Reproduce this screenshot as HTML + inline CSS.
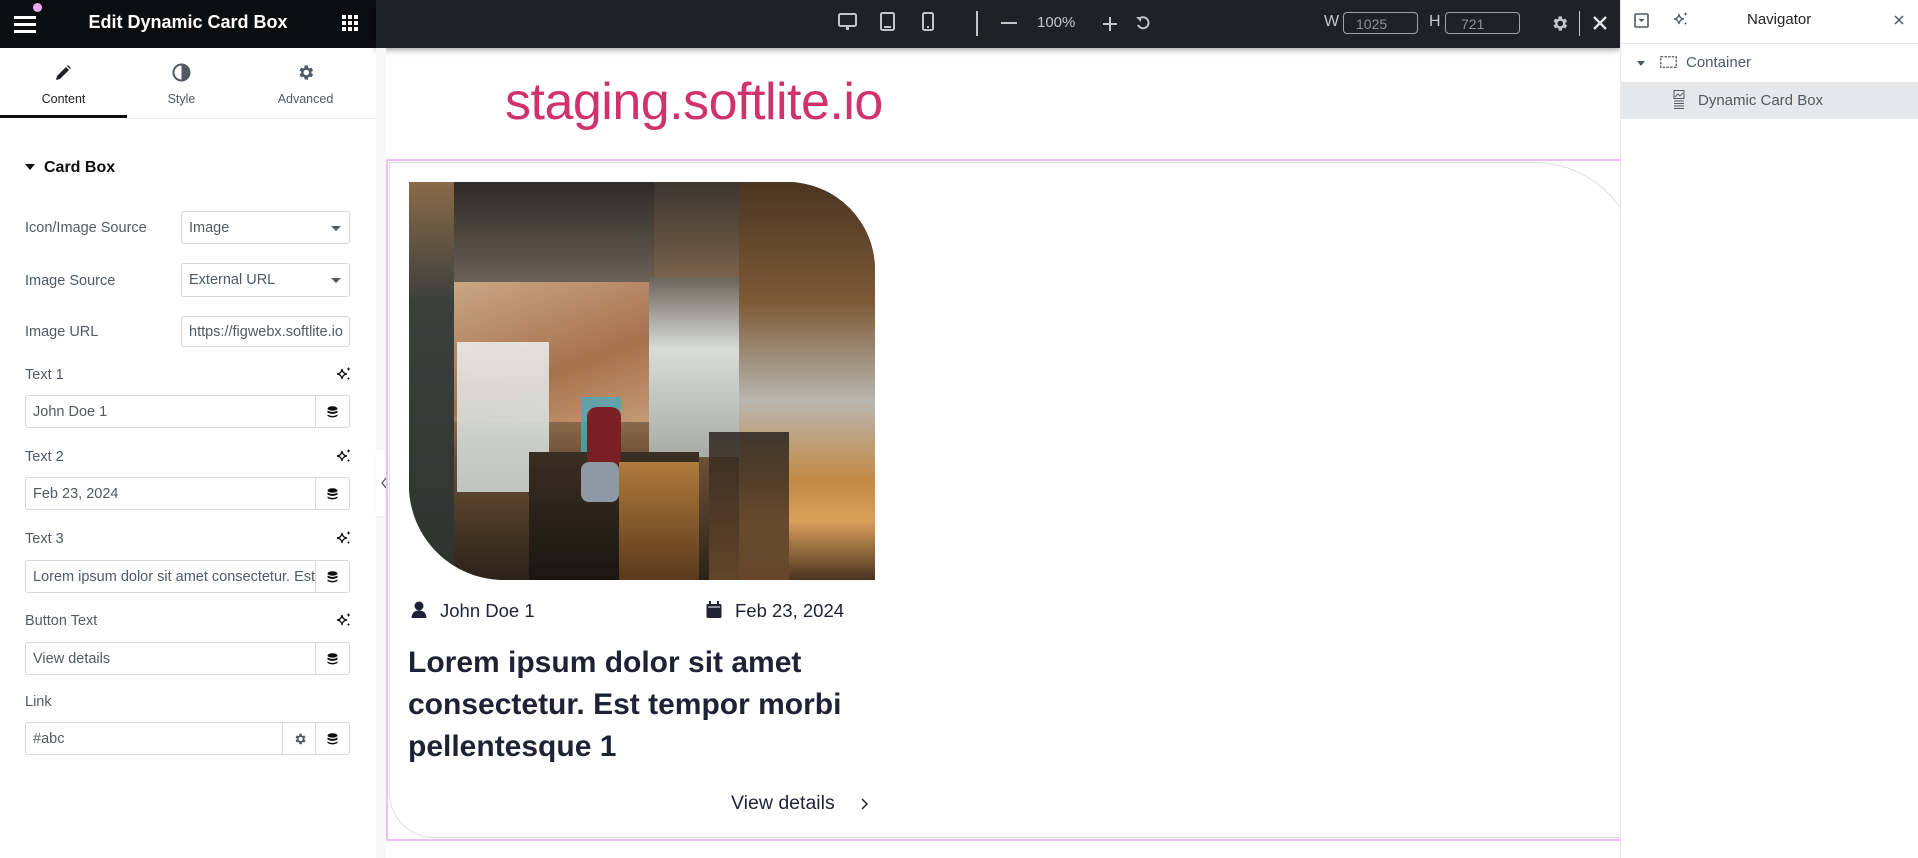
<!DOCTYPE html>
<html><head><meta charset="utf-8">
<style>
*{box-sizing:border-box;margin:0;padding:0}
body{width:1918px;height:858px;overflow:hidden;font-family:"Liberation Sans",Arial,sans-serif;background:#fff;position:relative}
.a{position:absolute}
.lbl{position:absolute;left:25px;font-size:14.5px;color:#515962}
.inp{position:absolute;border:1px solid #d5d8dc;border-radius:3px;background:#fff;font-size:14.5px;color:#515962;padding-left:7px;display:flex;align-items:center;overflow:hidden;white-space:nowrap}
.btn{position:absolute;top:0;bottom:0;width:34px;border-left:1px solid #d5d8dc;display:flex;align-items:center;justify-content:center;background:#fff}
.caret{position:absolute;right:8px;top:50%;margin-top:-2px;width:0;height:0;border-left:5px solid transparent;border-right:5px solid transparent;border-top:5px solid #515962}
.spark{position:absolute;left:336px}
</style></head><body>

<div class="a" style="left:0;top:0;width:376px;height:48px;background:#0c0d0e"></div>
<svg class="a" style="left:14px;top:14px" width="24" height="20"><rect x="0" y="2" width="22" height="3" fill="#fff"/><rect x="0" y="9" width="22" height="3" fill="#fff"/><rect x="0" y="16" width="22" height="3" fill="#fff"/></svg>
<div class="a" style="left:33px;top:3px;width:9px;height:9px;border-radius:50%;background:#f0a8f0"></div>
<div class="a" style="left:0;width:376px;top:12px;text-align:center;color:#fff;font-weight:bold;font-size:18px">Edit Dynamic Card Box</div>
<svg class="a" style="left:342px;top:15px" width="17" height="17" fill="#fff"><rect x="0" y="0" width="4" height="4"/><rect x="6" y="0" width="4" height="4"/><rect x="12" y="0" width="4" height="4"/><rect x="0" y="6" width="4" height="4"/><rect x="6" y="6" width="4" height="4"/><rect x="12" y="6" width="4" height="4"/><rect x="0" y="12" width="4" height="4"/><rect x="6" y="12" width="4" height="4"/><rect x="12" y="12" width="4" height="4"/></svg>

<svg class="a" style="left:54px;top:64px" width="18" height="18"><path d="M2 16 L3 12 L12 3 L15 6 L6 15 Z" fill="#1f2124"/><path d="M13 2 L14 1 L17 4 L16 5Z" fill="#1f2124"/></svg>
<div class="a" style="left:0;width:127px;top:92px;text-align:center;font-size:12.5px;color:#1f2124">Content</div>
<div class="a" style="left:0;top:115px;width:127px;height:3px;background:#0c0d0e"></div>
<svg class="a" style="left:172px;top:63px" width="19" height="19"><circle cx="9.5" cy="9.5" r="8" fill="none" stroke="#515962" stroke-width="2"/><path d="M9.5 1.5 A8 8 0 0 1 9.5 17.5Z" fill="#515962"/></svg>
<div class="a" style="left:118px;width:127px;top:92px;text-align:center;font-size:12.5px;color:#515962">Style</div>
<svg class="a" style="left:296px;top:63px" width="19" height="19" viewBox="0 0 24 24"><path fill="#515962" d="M19.4 13a7.5 7.5 0 0 0 0-2l2.1-1.6-2-3.5-2.5 1a7 7 0 0 0-1.7-1L15 3h-4l-.4 2.9a7 7 0 0 0-1.7 1l-2.5-1-2 3.5L6.6 11a7.5 7.5 0 0 0 0 2l-2.2 1.6 2 3.5 2.5-1a7 7 0 0 0 1.7 1L11 21h4l.4-2.9a7 7 0 0 0 1.7-1l2.5 1 2-3.5ZM13 15.5A3.5 3.5 0 1 1 13 8.5a3.5 3.5 0 0 1 0 7Z"/></svg>
<div class="a" style="left:242px;width:127px;top:92px;text-align:center;font-size:12.5px;color:#515962">Advanced</div>
<div class="a" style="left:127px;top:118px;width:249px;height:1px;background:#e6e8ea"></div>

<div class="a" style="left:25px;top:164px;width:0;height:0;border-left:5px solid transparent;border-right:5px solid transparent;border-top:6px solid #0c0d0e"></div>
<div class="a" style="left:44px;top:159px;font-size:16px;font-weight:bold;color:#0c0d0e">Card Box</div>

<div class="lbl" style="top:220px">Icon/Image Source</div>
<div class="inp" style="left:181px;top:211px;width:169px;height:33px">Image<span class="caret"></span></div>
<div class="lbl" style="top:273px">Image Source</div>
<div class="inp" style="left:181px;top:263px;width:169px;height:34px">External URL<span class="caret"></span></div>
<div class="lbl" style="top:324px">Image URL</div>
<div class="inp" style="left:181px;top:316px;width:169px;height:31px">https://figwebx.softlite.io</div>

<div class="lbl" style="top:367px">Text 1</div>
<div class="inp" style="left:25px;top:395px;width:325px;height:33px">John Doe 1<div class="btn" style="right:0"><svg width="11" height="12"><ellipse cx="5.5" cy="2.5" rx="5" ry="2.2" fill="#0c0d0e"/><path d="M0.5 4.5 q5 3 10 0 v2 q-5 3 -10 0z M0.5 8.5 q5 3 10 0 v1.5 q-5 3 -10 0z" fill="#0c0d0e"/></svg></div></div>
<div class="lbl" style="top:449px">Text 2</div>
<div class="inp" style="left:25px;top:477px;width:325px;height:33px">Feb 23, 2024<div class="btn" style="right:0"><svg width="11" height="12"><ellipse cx="5.5" cy="2.5" rx="5" ry="2.2" fill="#0c0d0e"/><path d="M0.5 4.5 q5 3 10 0 v2 q-5 3 -10 0z M0.5 8.5 q5 3 10 0 v1.5 q-5 3 -10 0z" fill="#0c0d0e"/></svg></div></div>
<div class="lbl" style="top:531px">Text 3</div>
<div class="inp" style="left:25px;top:560px;width:325px;height:33px">Lorem ipsum dolor sit amet consectetur. Est<div class="btn" style="right:0"><svg width="11" height="12"><ellipse cx="5.5" cy="2.5" rx="5" ry="2.2" fill="#0c0d0e"/><path d="M0.5 4.5 q5 3 10 0 v2 q-5 3 -10 0z M0.5 8.5 q5 3 10 0 v1.5 q-5 3 -10 0z" fill="#0c0d0e"/></svg></div></div>
<div class="lbl" style="top:613px">Button Text</div>
<div class="inp" style="left:25px;top:642px;width:325px;height:33px">View details<div class="btn" style="right:0"><svg width="11" height="12"><ellipse cx="5.5" cy="2.5" rx="5" ry="2.2" fill="#0c0d0e"/><path d="M0.5 4.5 q5 3 10 0 v2 q-5 3 -10 0z M0.5 8.5 q5 3 10 0 v1.5 q-5 3 -10 0z" fill="#0c0d0e"/></svg></div></div>
<div class="lbl" style="top:694px">Link</div>
<div class="inp" style="left:25px;top:722px;width:325px;height:33px">#abc
<div class="btn" style="right:33px"><svg width="14" height="14" viewBox="0 0 24 24"><path fill="#515962" d="M19.4 13a7.5 7.5 0 0 0 0-2l2.1-1.6-2-3.5-2.5 1a7 7 0 0 0-1.7-1L15 3h-4l-.4 2.9a7 7 0 0 0-1.7 1l-2.5-1-2 3.5L6.6 11a7.5 7.5 0 0 0 0 2l-2.2 1.6 2 3.5 2.5-1a7 7 0 0 0 1.7 1L11 21h4l.4-2.9a7 7 0 0 0 1.7-1l2.5 1 2-3.5ZM13 15.5A3.5 3.5 0 1 1 13 8.5a3.5 3.5 0 0 1 0 7Z"/></svg></div>
<div class="btn" style="right:0"><svg width="11" height="12"><ellipse cx="5.5" cy="2.5" rx="5" ry="2.2" fill="#0c0d0e"/><path d="M0.5 4.5 q5 3 10 0 v2 q-5 3 -10 0z M0.5 8.5 q5 3 10 0 v1.5 q-5 3 -10 0z" fill="#0c0d0e"/></svg></div></div>

<svg class="spark" style="top:366px" width="16" height="16"><path d="M6 3 Q6.5 7.5 11 8 Q6.5 8.5 6 13 Q5.5 8.5 1 8 Q5.5 7.5 6 3Z" fill="none" stroke="#0c0d0e" stroke-width="1.2"/><path d="M12.5 1 l.6 1.4 1.4.6-1.4.6-.6 1.4-.6-1.4-1.4-.6 1.4-.6z M12.5 11 l.5 1 1 .5-1 .5-.5 1-.5-1-1-.5 1-.5z" fill="#0c0d0e"/></svg>
<svg class="spark" style="top:448px" width="16" height="16"><path d="M6 3 Q6.5 7.5 11 8 Q6.5 8.5 6 13 Q5.5 8.5 1 8 Q5.5 7.5 6 3Z" fill="none" stroke="#0c0d0e" stroke-width="1.2"/><path d="M12.5 1 l.6 1.4 1.4.6-1.4.6-.6 1.4-.6-1.4-1.4-.6 1.4-.6z M12.5 11 l.5 1 1 .5-1 .5-.5 1-.5-1-1-.5 1-.5z" fill="#0c0d0e"/></svg>
<svg class="spark" style="top:530px" width="16" height="16"><path d="M6 3 Q6.5 7.5 11 8 Q6.5 8.5 6 13 Q5.5 8.5 1 8 Q5.5 7.5 6 3Z" fill="none" stroke="#0c0d0e" stroke-width="1.2"/><path d="M12.5 1 l.6 1.4 1.4.6-1.4.6-.6 1.4-.6-1.4-1.4-.6 1.4-.6z M12.5 11 l.5 1 1 .5-1 .5-.5 1-.5-1-1-.5 1-.5z" fill="#0c0d0e"/></svg>
<svg class="spark" style="top:612px" width="16" height="16"><path d="M6 3 Q6.5 7.5 11 8 Q6.5 8.5 6 13 Q5.5 8.5 1 8 Q5.5 7.5 6 3Z" fill="none" stroke="#0c0d0e" stroke-width="1.2"/><path d="M12.5 1 l.6 1.4 1.4.6-1.4.6-.6 1.4-.6-1.4-1.4-.6 1.4-.6z M12.5 11 l.5 1 1 .5-1 .5-.5 1-.5-1-1-.5 1-.5z" fill="#0c0d0e"/></svg>

<div class="a" style="left:376px;top:0;width:1244px;height:48px;background:#1f2124;box-shadow:0 2px 6px rgba(0,0,0,.35)"></div>
<svg class="a" style="left:838px;top:13px" width="20" height="19"><rect x="1" y="1" width="17" height="12" rx="1.5" fill="none" stroke="#c2c6cc" stroke-width="2"/><rect x="8" y="14" width="3" height="3" fill="#c2c6cc"/></svg>
<svg class="a" style="left:880px;top:12px" width="16" height="20"><rect x="1" y="1" width="13" height="17" rx="1.5" fill="none" stroke="#c2c6cc" stroke-width="2"/><rect x="4" y="14" width="7" height="2" fill="#c2c6cc"/></svg>
<svg class="a" style="left:922px;top:12px" width="12" height="20"><rect x="1" y="1" width="10" height="17" rx="1.5" fill="none" stroke="#c2c6cc" stroke-width="2"/><rect x="5" y="14" width="2" height="2" fill="#c2c6cc"/></svg>
<div class="a" style="left:976px;top:11px;width:2px;height:25px;background:#c2c6cc"></div>
<div class="a" style="left:1001px;top:22px;width:16px;height:2px;background:#c2c6cc"></div>
<div class="a" style="left:1037px;top:14px;font-size:15px;color:#c2c6cc">100%</div>
<svg class="a" style="left:1102px;top:16px" width="16" height="16"><path d="M8 1v14M1 8h14" stroke="#c2c6cc" stroke-width="2"/></svg>
<svg class="a" style="left:1135px;top:15px" width="16" height="16"><path d="M4 4 A5.5 5.5 0 1 1 3 10" fill="none" stroke="#c2c6cc" stroke-width="2"/><path d="M1 2 L6 2 L6 7Z" fill="#c2c6cc"/></svg>
<div class="a" style="left:1324px;top:13px;font-size:16px;color:#c2c6cc">W</div>
<div class="a" style="left:1343px;top:12px;width:75px;height:22px;border:1px solid #9da3ab;border-radius:4px;color:#8d939b;font-size:14px;padding:3px 0 0 12px">1025</div>
<div class="a" style="left:1429px;top:13px;font-size:16px;color:#c2c6cc">H</div>
<div class="a" style="left:1445px;top:12px;width:75px;height:22px;border:1px solid #9da3ab;border-radius:4px;color:#8d939b;font-size:14px;padding:3px 0 0 15px">721</div>
<svg class="a" style="left:1550px;top:14px" width="19" height="19" viewBox="0 0 24 24"><path fill="#c2c6cc" d="M19.4 13a7.5 7.5 0 0 0 0-2l2.1-1.6-2-3.5-2.5 1a7 7 0 0 0-1.7-1L15 3h-4l-.4 2.9a7 7 0 0 0-1.7 1l-2.5-1-2 3.5L6.6 11a7.5 7.5 0 0 0 0 2l-2.2 1.6 2 3.5 2.5-1a7 7 0 0 0 1.7 1L11 21h4l.4-2.9a7 7 0 0 0 1.7-1l2.5 1 2-3.5ZM13 15.5A3.5 3.5 0 1 1 13 8.5a3.5 3.5 0 0 1 0 7Z"/></svg>
<div class="a" style="left:1579px;top:11px;width:1px;height:25px;background:#c2c6cc"></div>
<svg class="a" style="left:1592px;top:15px" width="16" height="16"><path d="M2 2L14 14M14 2L2 14" stroke="#e0e2e5" stroke-width="2.4"/></svg>

<div class="a" style="left:376px;top:48px;width:10px;height:810px;background:#f8f8f9"></div>
<div class="a" style="left:376px;top:450px;width:20px;height:66px;background:#fff;border-radius:0 4px 4px 0;box-shadow:1px 0 3px rgba(0,0,0,.08)"></div>
<svg class="a" style="left:380px;top:477px" width="8" height="12"><path d="M6 1L2 6L6 11" fill="none" stroke="#515962" stroke-width="1.4"/></svg>
<div class="a" style="left:505px;top:72px;font-size:52px;letter-spacing:-0.5px;color:#d1326b;font-family:'Liberation Sans',Arial,sans-serif">staging.softlite.io</div>

<div class="a" style="left:386px;top:159px;width:1240px;height:682px;border:2px solid #f2bbf5;border-right:none"></div>
<div class="a" style="left:389px;top:162px;width:1250px;height:676px;border:1px solid #dedede;border-radius:0 105px 0 45px;overflow:hidden;background:#fff"></div>

<div class="a" style="left:409px;top:182px;width:466px;height:398px;border-radius:0 88px 0 95px;overflow:hidden;background:#6b4a2c">
  <div class="a" style="left:0;top:0;width:466px;height:398px;background:linear-gradient(180deg,#3a3530 0%,#6f5a45 20%,#b9926a 45%,#6b4f35 70%,#2b2219 100%)"></div>
  <div class="a" style="left:0;top:0;width:45px;height:398px;background:linear-gradient(180deg,#8a6a48 0%,#3b403d 30%,#2e3330 100%)"></div>
  <div class="a" style="left:45px;top:0;width:200px;height:100px;background:linear-gradient(180deg,#2e2a26,#6a6057)"></div>
  <div class="a" style="left:45px;top:100px;width:195px;height:140px;background:linear-gradient(160deg,#c9a785,#a8714e 60%,#c49b74)"></div>
  <div class="a" style="left:48px;top:160px;width:92px;height:150px;background:linear-gradient(180deg,#e8ece8,#c9d2cf);opacity:.9"></div>
  <div class="a" style="left:172px;top:215px;width:40px;height:55px;background:#4fa8b8;opacity:.8"></div>
  <div class="a" style="left:240px;top:95px;width:90px;height:180px;background:linear-gradient(180deg,#6a635a,#d8dcd9 40%,#a9aba5)"></div>
  <div class="a" style="left:120px;top:270px;width:170px;height:128px;background:linear-gradient(180deg,#3a2e22,#1a1612)"></div>
  <div class="a" style="left:178px;top:225px;width:34px;height:60px;background:#7a1f24;border-radius:10px"></div>
  <div class="a" style="left:172px;top:280px;width:38px;height:40px;background:#8d9aa5;border-radius:8px"></div>
  <div class="a" style="left:210px;top:280px;width:80px;height:118px;background:linear-gradient(180deg,#b07a3c,#5a3a1c)"></div>
  <div class="a" style="left:330px;top:0;width:136px;height:398px;background:linear-gradient(180deg,#4a3522 0%,#7d5a36 30%,#b8b6b0 55%,#c28a45 75%,#d9a05a 85%,#4b3420 100%)"></div>
  <div class="a" style="left:300px;top:250px;width:80px;height:148px;background:linear-gradient(180deg,#2a2420,#6b4a2a);opacity:.85"></div>
</div>

<svg class="a" style="left:411px;top:601px" width="16" height="17"><circle cx="8" cy="5" r="4.5" fill="#1f2235"/><path d="M0.5 17 Q1 9.5 8 9.5 Q15 9.5 15.5 17Z" fill="#1f2235"/></svg>
<div class="a" style="left:440px;top:600px;font-size:18.5px;color:#1f2235">John Doe 1</div>
<svg class="a" style="left:706px;top:601px" width="16" height="17"><rect x="0.5" y="3" width="15" height="14" rx="1.5" fill="#1f2235"/><rect x="3" y="0" width="2" height="4" fill="#1f2235"/><rect x="11" y="0" width="2" height="4" fill="#1f2235"/><rect x="2" y="5.5" width="12" height="1" fill="#fff"/></svg>
<div class="a" style="left:735px;top:600px;font-size:18.5px;color:#1f2235">Feb 23, 2024</div>
<div class="a" style="left:408px;top:642px;width:460px;font-size:30px;line-height:42px;font-weight:bold;color:#1f2235">Lorem ipsum dolor sit amet consectetur. Est tempor morbi pellentesque 1</div>
<div class="a" style="left:731px;top:792px;font-size:19.5px;color:#1f2235">View details</div>
<svg class="a" style="left:860px;top:796px" width="10" height="16"><path d="M2 3L7 8L2 13" fill="none" stroke="#1f2235" stroke-width="1.5"/></svg>

<div class="a" style="left:1620px;top:0;width:298px;height:858px;background:#fff;border-left:1px solid #e6e8ea"></div>
<div class="a" style="left:1620px;top:43px;width:298px;height:1px;background:#e6e8ea"></div>
<svg class="a" style="left:1634px;top:13px" width="15" height="15"><rect x="1" y="1" width="13" height="13" rx="1" fill="none" stroke="#515962" stroke-width="1.6"/><path d="M4.5 6h6l-3 3z" fill="#515962"/></svg>
<svg class="a" style="left:1673px;top:11px" width="16" height="16"><path d="M6 3 Q6.5 7.5 11 8 Q6.5 8.5 6 13 Q5.5 8.5 1 8 Q5.5 7.5 6 3Z" fill="none" stroke="#515962" stroke-width="1.2"/><path d="M12.5 1 l.6 1.4 1.4.6-1.4.6-.6 1.4-.6-1.4-1.4-.6 1.4-.6z M12.5 11 l.5 1 1 .5-1 .5-.5 1-.5-1-1-.5 1-.5z" fill="#515962"/></svg>
<div class="a" style="left:1747px;top:11px;font-size:15px;color:#1f2124">Navigator</div>
<svg class="a" style="left:1894px;top:15px" width="10" height="10"><path d="M1 1L9 9M9 1L1 9" stroke="#515962" stroke-width="1.5"/></svg>
<div class="a" style="left:1637px;top:61px;width:0;height:0;border-left:4.5px solid transparent;border-right:4.5px solid transparent;border-top:5px solid #515962"></div>
<svg class="a" style="left:1660px;top:56px" width="17" height="12"><rect x="0.75" y="0.75" width="15.5" height="10.5" fill="none" stroke="#515962" stroke-width="1.3" stroke-dasharray="2.5 1.2"/></svg>
<div class="a" style="left:1686px;top:54px;font-size:15px;color:#515962">Container</div>
<div class="a" style="left:1621px;top:82px;width:297px;height:37px;background:#e6e8ea"></div>
<svg class="a" style="left:1673px;top:90px" width="12" height="19"><rect x="1" y="0.5" width="10" height="8" fill="none" stroke="#515962" stroke-width="1"/><path d="M2 7L5 4L7 6L10 3" fill="none" stroke="#515962" stroke-width=".9"/><path d="M1 11h10M1 13.5h10M1 16h10M1 18.5h10" stroke="#515962" stroke-width="1"/></svg>
<div class="a" style="left:1698px;top:92px;font-size:15px;color:#515962">Dynamic Card Box</div>
</body></html>
